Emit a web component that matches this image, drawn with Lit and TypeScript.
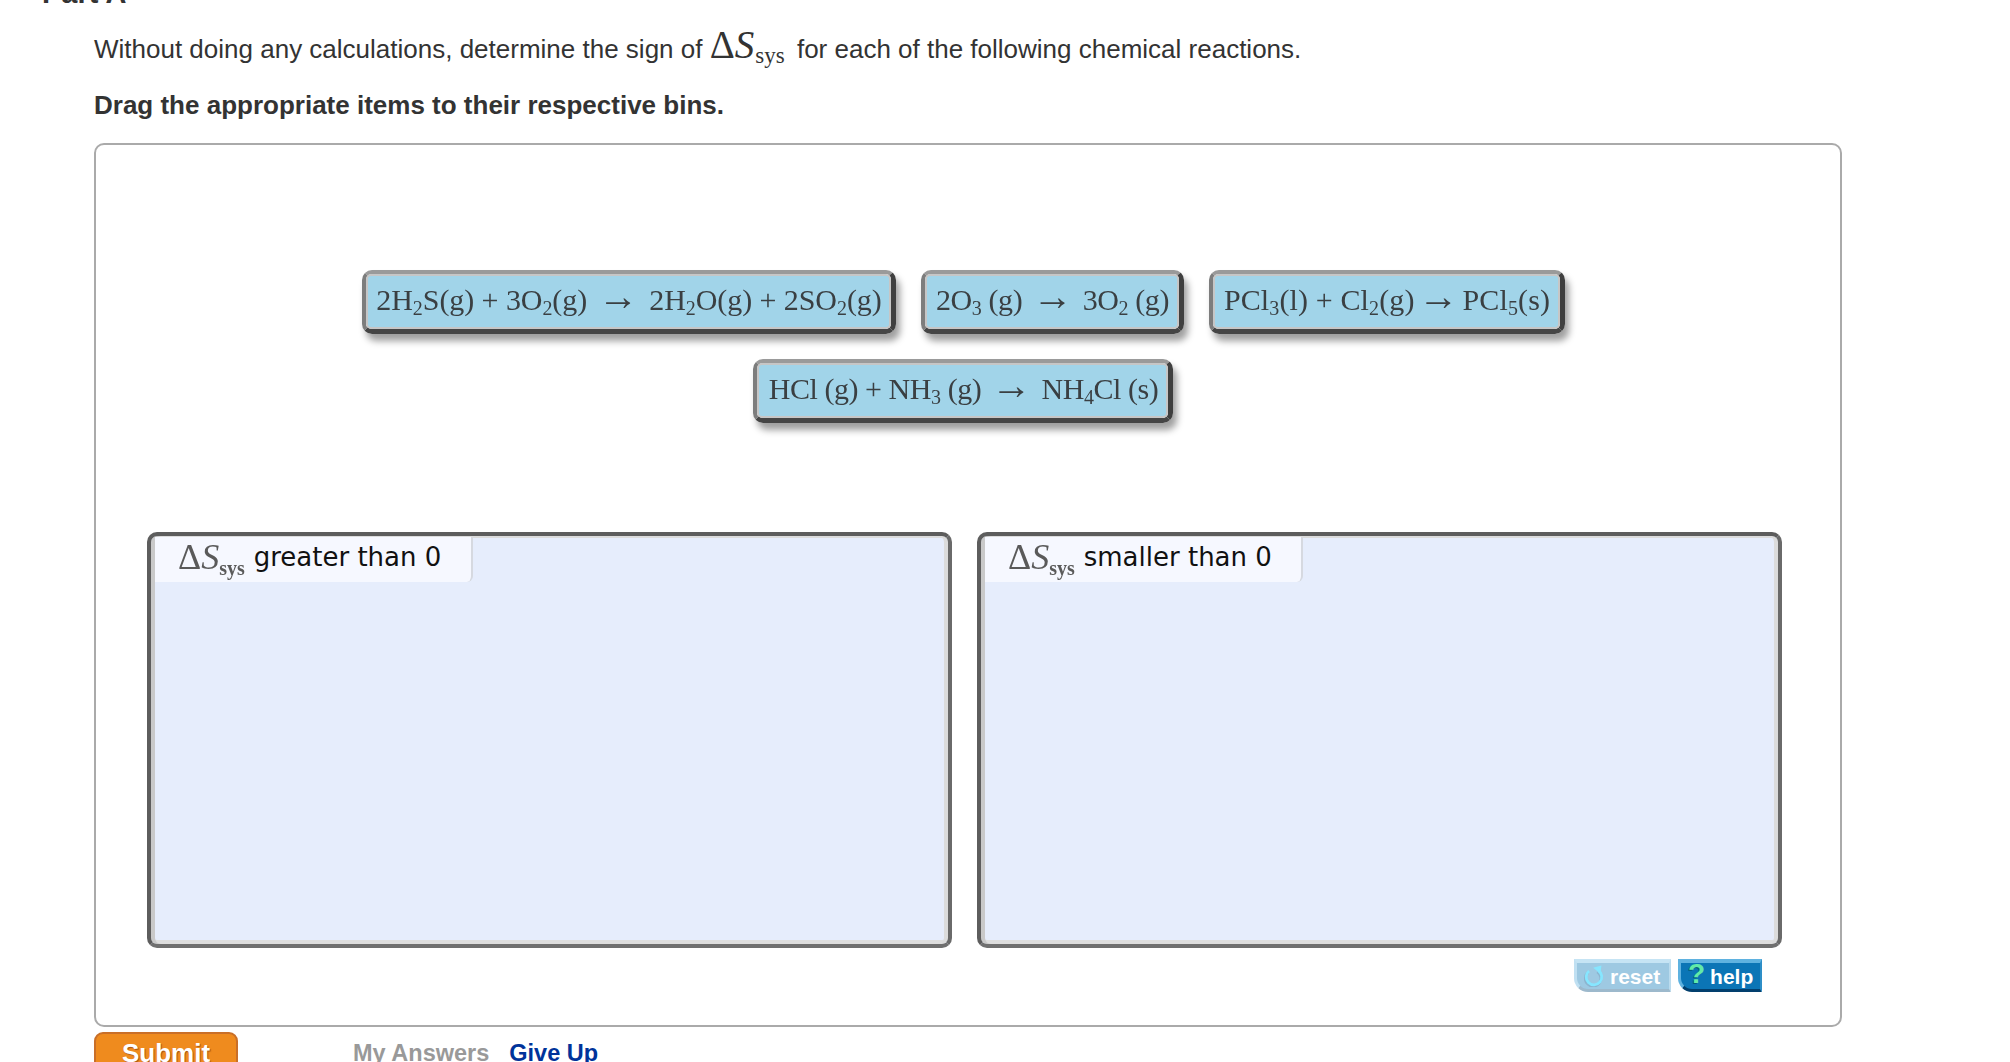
import { LitElement, html, css } from "lit";
import { customElement } from "lit/decorators.js";

const deltaS = () => html`<span class="math"><span class="delta">Δ</span><i>S</i><sub>sys</sub></span>`;
const arrow = html`<span class="arr">→</span>`;

@customElement("app-root")
export class AppRoot extends LitElement {
  static styles = css`
    :host {
      display: block;
      height: 1062px;
      width: 2010px;
      overflow: hidden;
      background: #fff;
      font-family: "Liberation Sans", Arial, sans-serif;
      color: #333;
      font-size: 26px;
    }
    h2 {
      margin: -23px 0 0 42px;
      font-size: 29px;
      line-height: 32px;
      font-weight: 700;
      color: #333;
    }
    .intro, .drag {
      margin: 0 0 0 94px;
      line-height: 36px;
      white-space: nowrap;
    }
    .intro { margin-top: 22px; }
    .drag { margin-top: 20px; font-weight: 700; }
    .math { font-family: "Liberation Serif", "Times New Roman", serif; }
    .intro .math { font-size: 39px; margin: 0 5px 0 0; color: #333; line-height: 0; }
    .intro .math sub { font-size: 23px; vertical-align: -5px; line-height: 0; margin-left: 1px; }
    .box {
      box-sizing: border-box;
      margin: 20px 0 0 94px;
      width: 1748px;
      height: 884px;
      border: 2px solid #aaa;
      border-radius: 10px;
      padding: 125px 58px 0 51px;
    }
    .chips {
      display: flex;
      flex-wrap: wrap;
      justify-content: center;
      gap: 25px;
      padding-right: 3px;
    }
    .chip {
      box-sizing: border-box;
      height: 64px;
      border-style: solid;
      border-width: 4px 5px 5px 4px;
      border-color: #9a9a9a #3f3f3f #454545 #7d7d7d;
      border-radius: 10px;
      box-shadow: 4px 7px 7px rgba(0, 0, 0, 0.38);
    }
    .chip-in {
      box-sizing: border-box;
      height: 100%;
      display: flex;
      align-items: center;
      justify-content: center;
      padding: 0 0 4px 2px;
      white-space: pre;
      background: #a1d4e9;
      border: 2px solid #c6c6c6;
      border-radius: 5px;
      font-family: "Liberation Serif", "Times New Roman", serif;
      font-size: 30px;
      color: #3a3f42;
    }
    .eq { filter: blur(0.45px); }
    .eq sub { font-size: 20px; vertical-align: -5px; line-height: 0; }
    .arr { font-size: 1.35em; line-height: 0; margin: 0 -4px; }
    .w1 { width: 534px; }
    .w2 { width: 263px; }
    .w3 { width: 356px; }
    .w4 { width: 420px; }
    .w1 .eq { letter-spacing: -0.07px; }
    .w2 .eq { letter-spacing: -0.41px; }
    .w3 .eq { letter-spacing: 0.13px; }
    .w4 .eq { letter-spacing: -0.46px; }
    .bins {
      display: flex;
      gap: 25px;
      margin-top: 109px;
    }
    .bin {
      box-sizing: border-box;
      width: 805px;
      height: 416px;
      background: #e6edfc;
      border-style: solid;
      border-width: 4px;
      border-color: #5d5d5d #6a6a6a #707070 #5d5d5d;
      border-radius: 10px;
      box-shadow: inset 4px 0 0 #c9c9c9, inset -4px 0 0 #dcdcdc, inset 0 -4px 0 #dedede, inset 0 2px 0 #dcdcdc;
    }
    .bin-head {
      box-sizing: border-box;
      width: 318px;
      height: 45px;
      margin: 1px 0 0 4px;
      padding: 0 0 5px 23px;
      display: flex;
      align-items: center;
      gap: 9px;
      background: #f6f8ff;
      border-right: 2px solid #d6d9e0;
      border-bottom-right-radius: 6px;
      color: #111;
      font-family: "DejaVu Sans", Verdana, sans-serif;
      font-size: 26px;
      white-space: nowrap;
    }
    .bin-head .math {
      font-size: 36px;
      color: #5a5a5a;
      filter: blur(0.4px);
      line-height: 1;
    }
    .bin-head .math sub {
      font-size: 20px;
      font-weight: 700;
      vertical-align: -6px;
      line-height: 0;
    }
    .tools {
      display: flex;
      justify-content: flex-end;
      gap: 7px;
      margin-top: 11px;
      margin-right: 20px;
    }
    .tool {
      box-sizing: border-box;
      height: 33px;
      display: flex;
      align-items: center;
      gap: 4px;
      border-style: solid;
      border-width: 4px 2px 3px 3px;
      border-bottom-left-radius: 14px;
      color: #fff;
      font-weight: 700;
      font-size: 21px;
      line-height: 1;
    }
    .tool svg { display: block; flex: none; }
    .tool-label { margin-top: 1px; }
    .reset {
      width: 97px;
      padding-left: 7px;
      background: #9ec9e2;
      border-color: #c6e4f4 #bcdcee #9db9cc #c0e0f2;
    }
    .help {
      width: 84px;
      padding-left: 7px;
      background: #0b75b6;
      border-color: #5fb2e0 #2d8ec7 #023f6d #5fb2e0;
    }
    .q {
      color: #62eaa8;
      font-size: 28px;
      font-weight: 700;
      margin: -5px 1px 0 0;
      text-shadow: -1px 1px 0 #045a7c;
    }
    .actions {
      display: flex;
      align-items: flex-start;
      margin: 5px 0 0 94px;
      font-weight: 700;
    }
    .submit {
      box-sizing: border-box;
      width: 144px;
      height: 52px;
      background: #ef8b1e;
      border: 2px solid #c96f28;
      border-radius: 9px;
      color: #fff;
      font-size: 26px;
      line-height: 38px;
      text-align: center;
      text-shadow: 1px 1px 1px #a4540f;
    }
    .links {
      display: flex;
      gap: 20px;
      margin: 6px 0 0 115px;
      line-height: 30px;
      font-size: 23.5px;
    }
    .mine { color: #999; }
    .give { color: #00339a; }
  `;

  private eq(content: unknown, w: string) {
    return html`<div class="chip ${w}"><div class="chip-in"><span class="eq">${content}</span></div></div>`;
  }

  render() {
    return html`
      <h2>Part A</h2>
      <p class="intro">Without doing any calculations, determine the sign of ${deltaS()} for each of the following chemical reactions.</p>
      <p class="drag">Drag the appropriate items to their respective bins.</p>
      <section class="box">
        <div class="chips">
          ${this.eq(html`2H<sub>2</sub>S(g) + 3O<sub>2</sub>(g)  ${arrow}  2H<sub>2</sub>O(g) + 2SO<sub>2</sub>(g)`, "w1")}
          ${this.eq(html`2O<sub>3</sub> (g)  ${arrow}  3O<sub>2</sub> (g)`, "w2")}
          ${this.eq(html`PCl<sub>3</sub>(l) + Cl<sub>2</sub>(g) ${arrow} PCl<sub>5</sub>(s)`, "w3")}
          ${this.eq(html`HCl (g) + NH<sub>3</sub> (g)  ${arrow}  NH<sub>4</sub>Cl (s)`, "w4")}
        </div>
        <div class="bins">
          <div class="bin"><div class="bin-head">${deltaS()}<span>greater than 0</span></div></div>
          <div class="bin"><div class="bin-head">${deltaS()}<span>smaller than 0</span></div></div>
        </div>
        <div class="tools">
          <div class="tool reset">
            <svg width="22" height="22" viewBox="0 0 24 24" fill="none">
              <path d="M15.5 6A8.5 8.5 0 1 1 5.5 6.5" transform="translate(-1 1.5)" stroke="#8db4cf" stroke-width="3"/>
              <path d="M15.5 6A8.5 8.5 0 1 1 5.5 6.5" stroke="#86e6ff" stroke-width="3"/>
              <path d="M10 3 L19 0.5 L18 9.5 Z" fill="#86e6ff"/>
            </svg>
            <span class="tool-label">reset</span>
          </div>
          <div class="tool help"><span class="q">?</span><span class="tool-label">help</span></div>
        </div>
      </section>
      <div class="actions">
        <div class="submit">Submit</div>
        <div class="links"><span class="mine">My Answers</span><span class="give">Give Up</span></div>
      </div>
    `;
  }
}
